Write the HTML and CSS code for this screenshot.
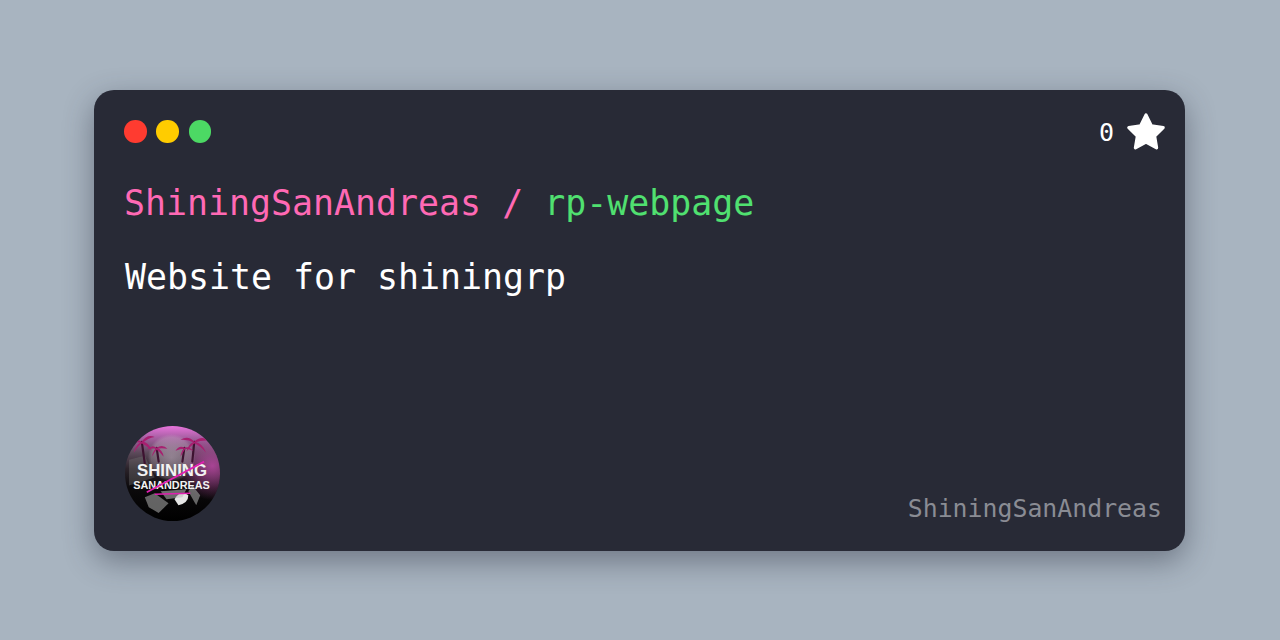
FILE: index.html
```html
<!DOCTYPE html>
<html lang="en">
<head>
<meta charset="utf-8">
<title>rp-webpage</title>
<link rel="stylesheet" href="styles.css">
</head>
<body>
<main class="card">
  <header class="top">
    <div class="dots">
      <span class="dot dot-red"></span>
      <span class="dot dot-yellow"></span>
      <span class="dot dot-green"></span>
    </div>
    <div class="stars">
      <span class="star-count">0</span>
      <svg class="star" viewBox="0 0 40 40" aria-hidden="true">
        <path d="M20 3 L25.3 13.8 L37.2 15.6 L28.6 24 L30.6 35.8 L20 30.2 L9.4 35.8 L11.4 24 L2.8 15.6 L14.7 13.8 Z" fill="#fff" stroke="#fff" stroke-width="3.2" stroke-linejoin="round"/>
      </svg>
    </div>
  </header>
  <h1 class="title"><span class="owner">ShiningSanAndreas</span> <span class="slash">/</span> <span class="repo">rp-webpage</span></h1>
  <p class="desc">Website for shiningrp</p>
  <footer class="bottom">
    <svg class="avatar" viewBox="0 0 96 96" role="img" aria-label="ShiningSanAndreas avatar">
      <defs>
        <linearGradient id="sky" x1="0" y1="0" x2="0" y2="1">
          <stop offset="0" stop-color="#e874dc"/>
          <stop offset=".12" stop-color="#a860a4"/>
          <stop offset=".28" stop-color="#5d4a5b"/>
          <stop offset=".45" stop-color="#2a2229"/>
          <stop offset=".65" stop-color="#0c0a0c"/>
          <stop offset="1" stop-color="#000"/>
        </linearGradient>
        <radialGradient id="glow" cx=".92" cy=".42" r=".36">
          <stop offset="0" stop-color="#b5479f" stop-opacity=".9"/>
          <stop offset="1" stop-color="#b5479f" stop-opacity="0"/>
        </radialGradient>
        <radialGradient id="moon" cx=".5" cy=".5" r=".5">
          <stop offset="0" stop-color="#c9b8c8" stop-opacity=".55"/>
          <stop offset=".85" stop-color="#c9b8c8" stop-opacity=".3"/>
          <stop offset="1" stop-color="#c9b8c8" stop-opacity="0"/>
        </radialGradient>
        <clipPath id="round"><circle cx="48" cy="48" r="48"/></clipPath>
      </defs>
      <g clip-path="url(#round)">
        <rect width="96" height="96" fill="url(#sky)"/>
        <rect width="96" height="96" fill="url(#glow)"/>
        <circle cx="47" cy="32" r="24" fill="url(#moon)"/>
        <path d="M4 34 L20 30 L30 52 L4 60 Z" fill="#777" opacity=".35"/>
        <g fill="none" stroke="#3d1230" stroke-width="2.2" stroke-linecap="round">
          <path d="M20 38 L17 16"/>
          <path d="M34 36 L32 22"/>
          <path d="M68 36 L70 16"/>
          <path d="M58 36 L60 22"/>
        </g>
        <g fill="#a81f70">
          <path d="M17 16 Q10 11 4 19 Q10 15 17 17 Z"/>
          <path d="M17 16 Q11 18 9 27 Q13 20 18 17 Z"/>
          <path d="M17 16 Q22 8 30 11 Q23 12 18 17 Z"/>
          <path d="M17 16 Q24 16 27 25 Q22 20 16 17 Z"/>
          <path d="M32 22 Q27 18 22 24 Q27 22 32 23 Z"/>
          <path d="M32 22 Q29 24 27 31 Q30 26 33 23 Z"/>
          <path d="M32 22 Q38 18 43 23 Q37 22 32 23 Z"/>
          <path d="M32 22 Q38 24 39 31 Q35 26 31 23 Z"/>
          <path d="M70 16 Q64 9 56 14 Q63 13 70 17 Z"/>
          <path d="M70 16 Q64 18 62 26 Q66 20 71 17 Z"/>
          <path d="M70 16 Q77 9 86 15 Q78 14 70 17 Z"/>
          <path d="M70 16 Q78 17 82 27 Q76 20 69 17 Z"/>
          <path d="M60 22 Q55 19 51 25 Q56 23 60 23 Z"/>
          <path d="M60 22 Q57 25 56 31 Q59 26 61 23 Z"/>
          <path d="M60 22 Q65 20 69 25 Q64 23 60 23 Z"/>
        </g>
        <path d="M20 72 L30 68 L44 78 L34 88 L24 82 Z" fill="#8b8b8b" opacity=".7"/>
        <path d="M50 74 Q56 64 64 70 Q64 78 54 80 Z" fill="#e6e6e6"/>
        <path d="M68 60 L76 70 L72 80 L64 66 Z" fill="#999" opacity=".65"/>
        <path d="M36 66 L62 64 L58 72 L42 74 Z" fill="#bbb" opacity=".55"/>
      </g>
      <text class="logo-line" x="47.5" y="51" text-anchor="middle">SHINING</text>
      <text class="logo-line logo-small" x="47" y="64" text-anchor="middle">SANANDREAS</text>
      <path d="M22 67 L80 36" stroke="#e01fb0" stroke-width="1.8"/>
      <path d="M30 69 L66 68" stroke="#e01fb0" stroke-width="1.6"/>
    </svg>
    <span class="author">ShiningSanAndreas</span>
  </footer>
</main>
</body>
</html>
```

FILE: styles.css
```css
* { box-sizing: border-box; }
html, body { margin: 0; height: 100%; }
body {
  background: #a8b4c0;
  padding: 90px 95px 89px 94px;
  font-family: "DejaVu Sans Mono", monospace;
  overflow: hidden;
}
.card {
  height: 461px;
  background: #282a36;
  border-radius: 20px;
  box-shadow: 0 10px 30px rgba(40, 45, 60, .45);
  padding: 22px 19px 30px 30px;
  display: flex;
  flex-direction: column;
}
.top {
  display: flex;
  justify-content: space-between;
  align-items: flex-start;
}
.dots {
  display: flex;
  gap: 9.9px;
  padding-top: 8px;
}
.dot {
  width: 22.5px;
  height: 22.5px;
  border-radius: 50%;
}
.dot-red { background: #ff3b30; }
.dot-yellow { background: #ffcc00; }
.dot-green { background: #4cd964; }
.stars {
  display: flex;
  align-items: center;
  gap: 12px;
}
.star-count {
  color: #fff;
  font-size: 25px;
  line-height: 40px;
  position: relative;
  top: 1px;
}
.star { width: 40px; height: 40px; display: block; }
.title {
  margin: 28px 0 0;
  font-size: 34.9px;
  font-weight: 400;
  line-height: 46px;
  white-space: pre;
}
.owner, .slash { color: #ff69b4; }
.repo { color: #50e070; }
.desc {
  margin: 28px 0 0;
  padding-left: 1px;
  color: #fff;
  font-size: 34.9px;
  line-height: 46px;
}
.bottom {
  margin-top: auto;
  display: flex;
  justify-content: space-between;
  align-items: flex-end;
  padding-left: 1px;
  padding-right: 4px;
}
.avatar { width: 95px; height: 95px; display: block; }
.logo-line {
  font-family: "Liberation Sans", sans-serif;
  font-weight: 700;
  font-size: 17px;
  fill: #f2f2f2;
}
.logo-small { font-size: 11px; }
.author {
  color: #8a8c94;
  font-size: 24.85px;
  line-height: 30px;
  margin-bottom: -3px;
}
```
